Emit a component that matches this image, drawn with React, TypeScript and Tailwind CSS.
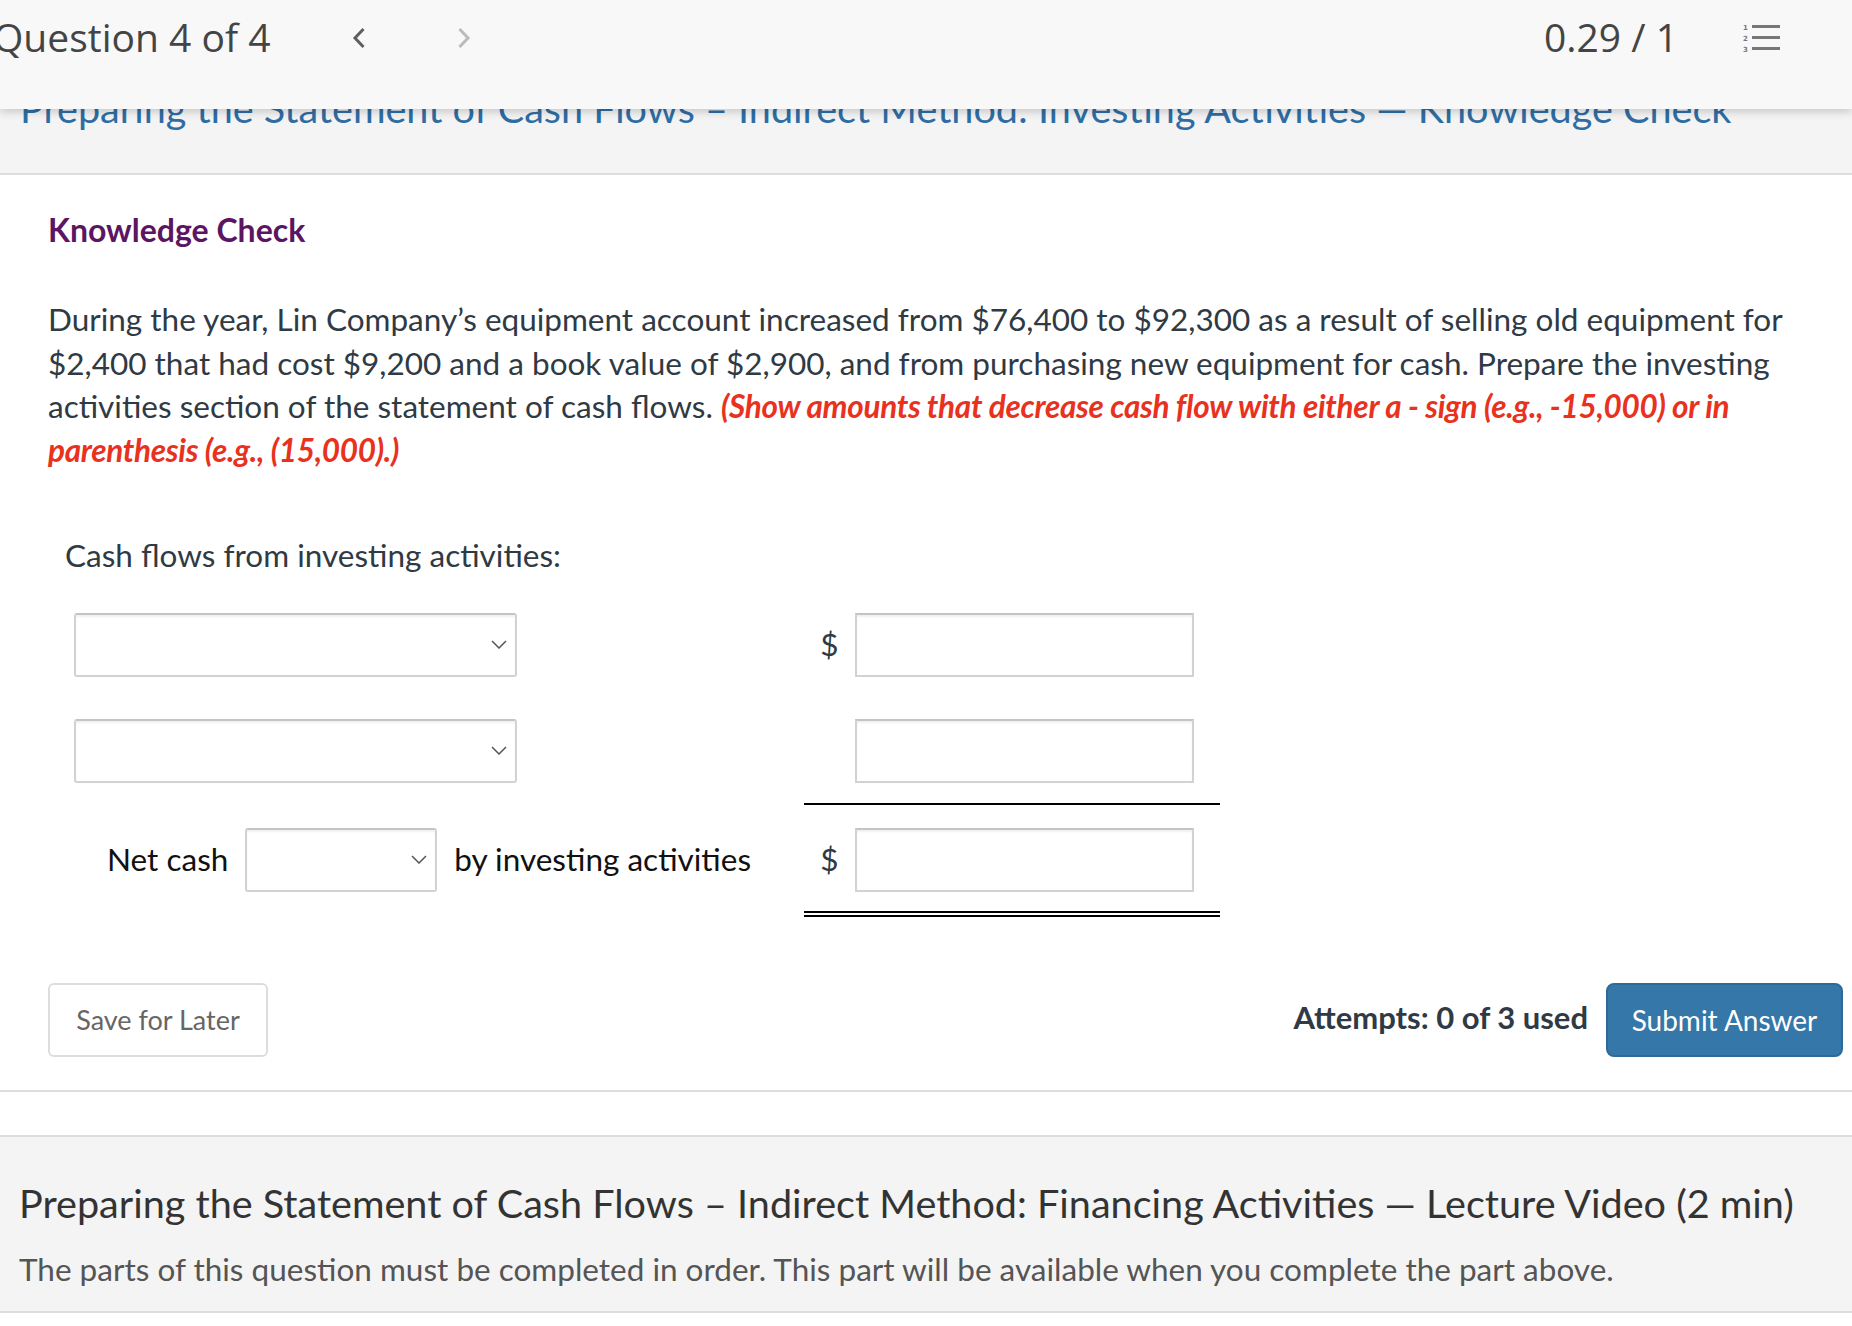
function Chevron({ dir, color }: { dir: "left" | "right"; color: string }) {
	return (
		<svg width="16" height="22" viewBox="0 0 16 22" fill="none">
			<path
				d={dir === "left" ? "M12.5 2 L4 11 L12.5 20" : "M3.5 2 L12 11 L3.5 20"}
				stroke={color}
				strokeWidth="3"
			/>
		</svg>
	);
}

function ListIcon() {
	return (
		<svg width="40" height="30" viewBox="0 0 40 30" fill="#777777">
			<rect x="10" y="2" width="28" height="3" />
			<rect x="10" y="13" width="28" height="3" />
			<rect x="10" y="24" width="28" height="3" />
			<text x="1" y="7" fontSize="7" fontFamily="DejaVu Sans, sans-serif" fontWeight="bold">1</text>
			<text x="1" y="18" fontSize="7" fontFamily="DejaVu Sans, sans-serif" fontWeight="bold">2</text>
			<text x="1" y="29" fontSize="7" fontFamily="DejaVu Sans, sans-serif" fontWeight="bold">3</text>
		</svg>
	);
}

function SelectBox({ width }: { width: string }) {
	return (
		<div
			className={`${width} h-[64px] shrink-0 flex items-center justify-end pr-[8px] bg-white border-2 border-[#d2d2d2] border-t-[#c4c4c4] rounded-[3px] shadow-[inset_0_2px_2px_rgba(0,0,0,0.06)]`}
		>
			<svg width="16" height="9" viewBox="0 0 16 9" fill="none">
				<path d="M1 1 L8 8 L15 1" stroke="#555555" strokeWidth="1.5" />
			</svg>
		</div>
	);
}

function AmountInput() {
	return (
		<input
			type="text"
			className="w-[339px] h-[64px] shrink-0 bg-white border-2 border-[#d2d2d2] border-t-[#c4c4c4] shadow-[inset_0_2px_2px_rgba(0,0,0,0.06)] outline-none"
		/>
	);
}

function Header() {
	return (
		<div className="absolute inset-x-0 top-0 h-[109px] bg-[#f8f8f8] shadow-[0_3px_8px_rgba(0,0,0,0.18)] font-['Open_Sans',sans-serif] text-[#444444]">
			<div className="flex items-center h-[52px] mt-[11px]">
				<span className="ml-[-7px] text-[39px] leading-[52px] whitespace-nowrap">Question 4 of 4</span>
				<div className="ml-[81px] mt-[2px]">
					<Chevron dir="left" color="#5f5f5f" />
				</div>
				<div className="ml-[89px] mt-[2px]">
					<Chevron dir="right" color="#bbbbbb" />
				</div>
				<span className="ml-auto text-[39px] leading-[52px] whitespace-nowrap">0.29 / 1</span>
				<div className="ml-[64px] mr-[70px] mt-[2px]">
					<ListIcon />
				</div>
			</div>
		</div>
	);
}

export default function App() {
	return (
		<div className="relative w-[1852px] h-[1326px] overflow-hidden bg-white font-['Lato',sans-serif]">
			<div className="bg-[#f4f4f4] border-b-2 border-[#dddddd] pt-[84px] pb-[41px] pl-[20px]">
				<h2 className="text-[39.6px] leading-[48px] text-[#2e6da4] whitespace-nowrap">
					Preparing the Statement of Cash Flows – Indirect Method: Investing Activities — Knowledge Check
				</h2>
			</div>

			<Header />

			<div className="border-b-2 border-[#dddddd] pl-[48px] pr-[9px] pt-[36px] pb-[33px]">
				<h3 className="text-[32px] leading-[38px] font-bold text-[#5c1562]">Knowledge Check</h3>
				<p className="mt-[49px] pr-[39px] text-[31.5px] leading-[43.7px] text-[#2f3a44]">
					During the year, Lin Company’s equipment account increased from $76,400 to $92,300 as a result of selling old equipment for $2,400 that had cost $9,200 and a book value of $2,900, and from purchasing new equipment for cash. Prepare the investing activities section of the statement of cash flows.{" "}
					<span className="font-bold italic text-[#e8321e] tracking-[-0.3px]">
						(Show amounts that decrease cash flow with either a - sign (e.g., -15,000) or in parenthesis (e.g., (15,000).)
					</span>
				</p>

				<div className="mt-[60px] ml-[17px] text-[31.5px] leading-[44px] text-[#2f3a44]">
					Cash flows from investing activities:
				</div>

				<div className="mt-[36px] ml-[26px] text-[31.5px] text-[#2f3a44]">
					<div className="flex items-center">
						<div className="w-[730px] shrink-0">
							<SelectBox width="w-[443px]" />
						</div>
						<span className="w-[51px] text-center">$</span>
						<AmountInput />
					</div>

					<div className="flex items-center mt-[42px]">
						<div className="w-[730px] shrink-0">
							<SelectBox width="w-[443px]" />
						</div>
						<span className="w-[51px]" />
						<AmountInput />
					</div>

					<div className="mt-[20px] ml-[730px] w-[416px] h-[2px] bg-black" />

					<div className="flex items-center mt-[23px]">
						<div className="w-[730px] shrink-0 flex items-center">
							<span className="ml-[33px] whitespace-nowrap text-[#111111]">Net cash</span>
							<div className="ml-[17px]">
								<SelectBox width="w-[192px]" />
							</div>
							<span className="ml-[17px] whitespace-nowrap text-[#111111]">by investing activities</span>
						</div>
						<span className="w-[51px] text-center">$</span>
						<AmountInput />
					</div>

					<div className="mt-[19px] ml-[730px] w-[416px] h-[6px] border-t-2 border-b-2 border-black" />
				</div>

				<div className="mt-[66px] flex items-center">
					<button className="w-[220px] h-[74px] border-2 border-[#dddddd] rounded-md bg-white text-[27px] text-[#666666]">
						Save for Later
					</button>
					<span className="ml-auto mb-[6px] text-[31px] font-bold text-[#2f3a44]">Attempts: 0 of 3 used</span>
					<button className="ml-[18px] w-[237px] h-[74px] bg-[#3477a8] border-2 border-[#2d6a99] rounded-lg text-[28px] text-white">
						Submit Answer
					</button>
				</div>
			</div>

			<div className="h-[43px]" />

			<div className="bg-[#f4f4f4] border-y-2 border-[#dddddd] pl-[19px] pt-[42px] pb-[22px]">
				<h2 className="text-[39.6px] leading-[48px] text-[#333333] whitespace-nowrap">
					Preparing the Statement of Cash Flows – Indirect Method: Financing Activities — Lecture Video (2 min)
				</h2>
				<p className="mt-[22px] text-[31.5px] leading-[40px] text-[#555555]">
					The parts of this question must be completed in order. This part will be available when you complete the part above.
				</p>
			</div>
		</div>
	);
}
